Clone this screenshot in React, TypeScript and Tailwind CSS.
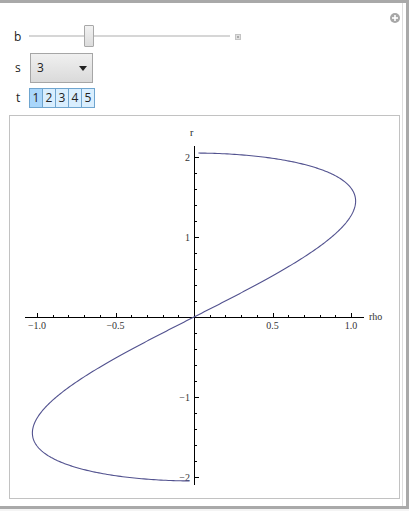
import { useMemo } from "react";

const ORIGIN_X = 194;
const ORIGIN_Y = 318;
const UNIT_X = 157;
const UNIT_Y = 80;

const px = (x: number) => ORIGIN_X + x * UNIT_X;
const py = (y: number) => ORIGIN_Y - y * UNIT_Y;

function Plot() {
  const curve = useMemo(() => {
    const a = 4.2;
    const yMax = 2.0492;
    const pts: string[] = [];
    const n = 400;
    for (let i = 0; i <= n; i++) {
      // denser sampling near the ends where the curve turns
      const t = -1 + (2 * i) / n;
      const y = yMax * Math.sin((t * Math.PI) / 2);
      const x = (y * Math.sqrt(Math.max(0, a - y * y))) / 2.04;
      pts.push(`${px(x).toFixed(2)},${py(y).toFixed(2)}`);
    }
    return "M" + pts.join(" L");
  }, []);

  const xTicks: { v: number; major: boolean }[] = [];
  for (let i = -10; i <= 10; i++) {
    if (i === 0) continue;
    xTicks.push({ v: i / 10, major: i % 5 === 0 });
  }
  const yTicks: { v: number; major: boolean }[] = [];
  for (let i = -10; i <= 10; i++) {
    if (i === 0) continue;
    yTicks.push({ v: i / 5, major: i % 5 === 0 });
  }

  return (
    <svg width={389} height={382} viewBox="10 117 389 382" className="block">
      {/* x axis */}
      <line x1={25} y1={ORIGIN_Y + 0.5} x2={364} y2={ORIGIN_Y + 0.5} stroke="#000" strokeWidth={1} />
      {xTicks.map((t) => (
        <line
          key={`x${t.v}`}
          x1={Math.round(px(t.v)) + 0.5}
          x2={Math.round(px(t.v)) + 0.5}
          y1={ORIGIN_Y}
          y2={ORIGIN_Y - (t.major ? 4 : 2)}
          stroke="#000"
          strokeWidth={1}
        />
      ))}
      {[
        { v: -1, s: "\u22121.0" },
        { v: -0.5, s: "\u22120.5" },
        { v: 0.5, s: "0.5" },
        { v: 1, s: "1.0" },
      ].map((l) => (
        <text
          key={l.s}
          x={px(l.v)}
          y={ORIGIN_Y + 12}
          textAnchor="middle"
          fontSize={10}
          fill="#333"
          fontFamily="'Liberation Serif', serif"
        >
          {l.s}
        </text>
      ))}
      <text x={369} y={ORIGIN_Y + 3} fontSize={10} fill="#333" fontFamily="'Liberation Serif', serif">
        rho
      </text>

      {/* y axis */}
      <line x1={ORIGIN_X + 0.5} y1={147} x2={ORIGIN_X + 0.5} y2={486} stroke="#000" strokeWidth={1} />
      {yTicks.map((t) => (
        <line
          key={`y${t.v}`}
          x1={ORIGIN_X}
          x2={ORIGIN_X + (t.major ? 5 : 3)}
          y1={Math.round(py(t.v)) + 0.5}
          y2={Math.round(py(t.v)) + 0.5}
          stroke="#000"
          strokeWidth={1}
        />
      ))}
      {[
        { v: 2, s: "2" },
        { v: 1, s: "1" },
        { v: -1, s: "\u22121" },
        { v: -2, s: "\u22122" },
      ].map((l) => (
        <text
          key={l.s}
          x={ORIGIN_X - 4}
          y={py(l.v) + 4}
          textAnchor="end"
          fontSize={10}
          fill="#333"
          fontFamily="'Liberation Serif', serif"
        >
          {l.s}
        </text>
      ))}
      <text x={190} y={137} fontSize={10} fill="#222" fontFamily="'Liberation Serif', serif">
        r
      </text>

      <path d={curve} fill="none" stroke="#52528f" strokeWidth={1.1} />
    </svg>
  );
}

export default function App() {
  const tabs = [1, 2, 3, 4, 5];
  return (
    <div
      className="h-[511px] w-[409px] overflow-hidden bg-[#f4f4f4] text-[#222]"
      style={{ fontFamily: "'Open Sans', 'Noto Sans', sans-serif" }}
    >
      <div className="h-[509px] w-[409px] border-t-[3px] border-r-[3px] border-b-[3px] border-[#a9a9a9] bg-white">
        <div className="flex h-full w-[403px] flex-col border-r border-[#dedede]">
          <div className="flex justify-end pr-[2px] pt-[10px]">
            <svg width={10} height={10} viewBox="0 0 10 10">
              <circle cx={5} cy={5} r={5} fill="#a7a7a7" />
              <rect x={2} y={4.2} width={6} height={1.6} fill="#fff" />
              <rect x={4.2} y={2} width={1.6} height={6} fill="#fff" />
            </svg>
          </div>

          {/* b slider */}
          <div className="mt-[2px] flex h-[23px] items-center">
            <span className="w-[29px] pl-[14px] text-[12px] leading-none">b</span>
            <div className="relative h-[23px] w-[201px]">
              <div className="absolute left-0 right-0 top-[10px] h-[2px] bg-[#d6d6d6]" />
              <div className="absolute left-[55px] top-0 h-[22px] w-[10px] rounded-[1px] border border-[#a8a8a8] bg-gradient-to-b from-[#f2f2f2] to-[#dcdcdc]" />
            </div>
            <div className="ml-[5px] flex h-[6px] w-[6px] items-center justify-center border border-[#c4c4c4] bg-[#e0e0e0]">
              <div className="h-[2px] w-[2px] bg-[#aaa]" />
            </div>
          </div>

          {/* s dropdown */}
          <div className="mt-[5px] flex items-center">
            <span className="w-[30px] pl-[15px] text-[12px] leading-none">s</span>
            <div className="flex h-[30px] w-[63px] items-center justify-between border border-[#a6a6a6] bg-gradient-to-b from-[#f0f0f0] to-[#dadada] pl-[6px] pr-[5px]">
              <span className="text-[12px] leading-none">3</span>
              <svg width={8} height={5} viewBox="0 0 8 5">
                <path d="M0 0 L8 0 L4 5 Z" fill="#222" />
              </svg>
            </div>
          </div>

          {/* t tabs */}
          <div className="mt-[5px] flex items-center">
            <span className="w-[29px] pl-[16px] text-[12px] leading-none">t</span>
            <div className="flex h-[20px] border-l border-[#6fa5cf]">
              {tabs.map((n) => (
                <div
                  key={n}
                  className={
                    n === 1
                      ? "flex w-[13px] items-center justify-center border-y border-r border-[#6fa5cf] bg-[#a9d6fb] text-[12px] leading-none"
                      : "flex w-[13px] items-center justify-center border-y border-r border-[#6fa5cf] bg-[#d9eefe] text-[12px] leading-none"
                  }
                >
                  {n}
                </div>
              ))}
            </div>
          </div>

          {/* plot frame */}
          <div className="ml-[9px] mt-[7px] h-[384px] w-[391px] border border-[#c2c2c2] bg-white">
            <Plot />
          </div>
        </div>
      </div>
    </div>
  );
}
